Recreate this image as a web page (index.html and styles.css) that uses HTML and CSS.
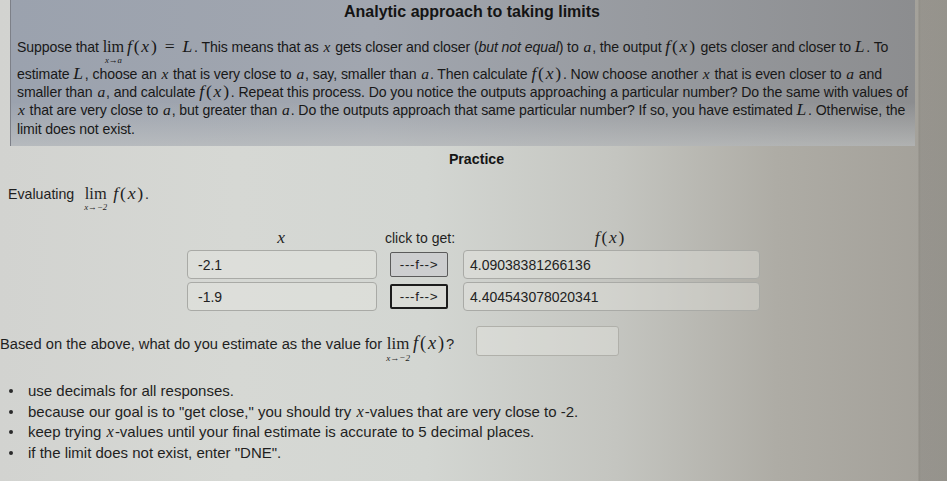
FILE: index.html
```html
<!DOCTYPE html>
<html>
<head>
<meta charset="utf-8">
<link rel="stylesheet" href="styles.css">
</head>
<body>
<div class="screen">
  <section class="panel">
    <h1 class="title">Analytic approach to taking limits</h1>
    <p class="intro">Suppose that <span class="lim"><span class="lim-top">lim</span><span class="lim-sub">x→a</span></span><span class="m big"><i>f</i>(<i>x</i>) = <i>L</i></span>. This means that as <i class="mv">x</i> gets closer and closer (<em>but not equal</em>) to <i class="mv">a</i>, the output <span class="m big"><i>f</i>(<i>x</i>)</span> gets closer and closer to <span class="m big"><i>L</i></span>. To<br>
    estimate <span class="m big"><i>L</i></span>, choose an <i class="mv">x</i> that is very close to <i class="mv">a</i>, say, smaller than <i class="mv">a</i>. Then calculate <span class="m big"><i>f</i>(<i>x</i>)</span>. Now choose another <i class="mv">x</i> that is even closer to <i class="mv">a</i> and<br>
    smaller than <i class="mv">a</i>, and calculate <span class="m big"><i>f</i>(<i>x</i>)</span>. Repeat this process. Do you notice the outputs approaching a particular number? Do the same with values of<br>
    <i class="mv">x</i> that are very close to <i class="mv">a</i>, but greater than <i class="mv">a</i>. Do the outputs approach that same particular number? If so, you have estimated <span class="m big"><i>L</i></span>. Otherwise, the<br>
    limit does not exist.</p>
  </section>

  <h2 class="practice">Practice</h2>

  <p class="evaluating">Evaluating <span class="lim wide"><span class="lim-top">lim</span><span class="lim-sub">x→−2</span></span><span class="m big"><i>f</i>(<i>x</i>)</span>.</p>

  <div class="table">
    <div class="head head-x"><span class="m big"><i>x</i></span></div>
    <div class="head head-btn">click to get:</div>
    <div class="head head-f"><span class="m big"><i>f</i>(<i>x</i>)</span></div>

    <div class="box in">-2.1</div>
    <div class="cell-btn"><span class="fbtn">---f--&gt;</span></div>
    <div class="box out">4.09038381266136</div>

    <div class="box in">-1.9</div>
    <div class="cell-btn"><span class="fbtn focus">---f--&gt;</span></div>
    <div class="box out">4.404543078020341</div>
  </div>

  <div class="question">
    <span class="q-text">Based on the above, what do you estimate as the value for <span class="lim"><span class="lim-top">lim</span><span class="lim-sub">x→−2</span></span><span class="m big"><i>f</i>(<i>x</i>)</span>?</span>
    <span class="answer"></span>
  </div>

  <ul class="notes">
    <li>use decimals for all responses.</li>
    <li>because our goal is to "get close," you should try <i class="mv">x</i>-values that are very close to -2.</li>
    <li>keep trying <i class="mv">x</i>-values until your final estimate is accurate to 5 decimal places.</li>
    <li>if the limit does not exist, enter "DNE".</li>
  </ul>
</div>
</body>
</html>
```

FILE: styles.css
```css
html, body {
  margin: 0;
  padding: 0;
}

body {
  width: 947px;
  height: 481px;
  overflow: hidden;
  font-family: "Liberation Sans", Arial, sans-serif;
  color: #1f1f1f;
  background:
    linear-gradient(to right, rgba(0,0,0,0) 0, rgba(0,0,0,0) 918px, rgba(90,88,80,0.25) 919px, rgba(0,0,0,0.08) 921px),
    linear-gradient(to right, #d2d3d0 0%, #d6d8d4 25%, #d3d6d2 45%, #c4c5c0 65%, #aeaca5 82%, #a29f98 100%);
}

.screen {
  width: 947px;
  height: 481px;
  display: flex;
  flex-direction: column;
}

.panel {
  margin-left: 10px;
  width: 905px;
  height: 146px;
  box-sizing: border-box;
  border-left: 1px solid #7d8088;
  padding: 2px 0 0 4px;
  background:
    linear-gradient(to bottom, rgba(0,0,0,0) 70%, rgba(200,202,200,0.6) 100%),
    linear-gradient(to right, #9ba2ae 0%, #a1a6af 40%, #979a9f 70%, #8c8d8f 100%);
}

.title {
  margin: 0;
  text-align: center;
  font-size: 16px;
  line-height: 19px;
  font-weight: bold;
  color: #141414;
  padding-left: 14px;
}

.intro {
  margin: 17px 0 0 2px;
  font-size: 14.1px;
  line-height: 18.2px;
  color: #181818;
  white-space: nowrap;
  letter-spacing: -0.1px;
}

.intro em {
  font-style: italic;
}

.m {
  font-family: "Liberation Serif", "DejaVu Serif", serif;
  font-size: 1.1em;
  line-height: 1;
  letter-spacing: 0.08em;
}

.m.big {
  font-size: 1.25em;
  letter-spacing: 0.1em;
}

.m i, .mv {
  font-style: italic;
}

.mv {
  font-family: "Liberation Serif", "DejaVu Serif", serif;
  font-size: 1.1em;
  line-height: 1;
  padding: 0 1px;
}

.lim {
  display: inline-flex;
  flex-direction: column;
  align-items: center;
  vertical-align: baseline;
  margin-right: 3px;
  font-family: "Liberation Serif", "DejaVu Serif", serif;
}

.lim.wide {
  margin: 0 6px 0 6px;
}

.lim-top {
  font-size: 1.15em;
  line-height: 1em;
}

.lim-sub {
  font-size: 0.62em;
  line-height: 1em;
  font-style: italic;
  margin-top: 1px;
}

.practice {
  margin: 5px 0 0 6px;
  text-align: center;
  font-size: 14.2px;
  line-height: 16px;
  font-weight: bold;
  color: #151515;
}

.evaluating {
  margin: 18px 0 0 8px;
  font-size: 14.2px;
  line-height: 18px;
}

.table {
  margin: 17px 0 0 187px;
  display: grid;
  grid-template-columns: 190px 86px 297px;
  row-gap: 3px;
  align-items: center;
}

.head {
  font-size: 14px;
  line-height: 18px;
  text-align: center;
}

.head-btn {
  text-align: left;
  padding-left: 8px;
}

.head-f {
  padding-right: 2px;
}

.box {
  height: 29px;
  box-sizing: border-box;
  border: 1px solid #a9aaa6;
  border-radius: 4px;
  background: rgba(236, 236, 228, 0.35);
  display: flex;
  align-items: center;
  font-size: 14px;
  color: #222;
}

.box.in {
  padding-left: 10px;
}

.box.out {
  padding-left: 6px;
}

.cell-btn {
  display: flex;
  padding-left: 13px;
}

.fbtn {
  display: inline-block;
  width: 58px;
  height: 25px;
  box-sizing: border-box;
  border: 1px solid #5b5b5b;
  border-radius: 2px;
  background: rgba(200, 200, 205, 0.55);
  font-size: 13.5px;
  line-height: 23px;
  text-align: center;
  letter-spacing: 0.6px;
  color: #1e1e1e;
}

.fbtn.focus {
  border: 2px solid #1c1c1c;
  line-height: 21px;
  background: rgba(225, 225, 220, 0.5);
}

.question {
  margin: 15px 0 0 0;
  display: flex;
  align-items: flex-start;
  font-size: 14.7px;
}

.q-text {
  line-height: 18px;
  margin-top: 8px;
}

.answer {
  display: block;
  width: 143px;
  height: 30px;
  box-sizing: border-box;
  margin-left: 22px;
  border: 1px solid #b0b0aa;
  border-radius: 3px;
  background: rgba(235, 235, 228, 0.35);
}

.notes {
  margin: 18px 0 0 0;
  padding: 0 0 0 28px;
  list-style: none;
  font-size: 15px;
  line-height: 20.5px;
}

.notes li {
  position: relative;
}

.notes li::before {
  content: "";
  position: absolute;
  left: -19px;
  top: 8px;
  width: 4px;
  height: 4px;
  border-radius: 50%;
  background: #2a2a2a;
}
```
